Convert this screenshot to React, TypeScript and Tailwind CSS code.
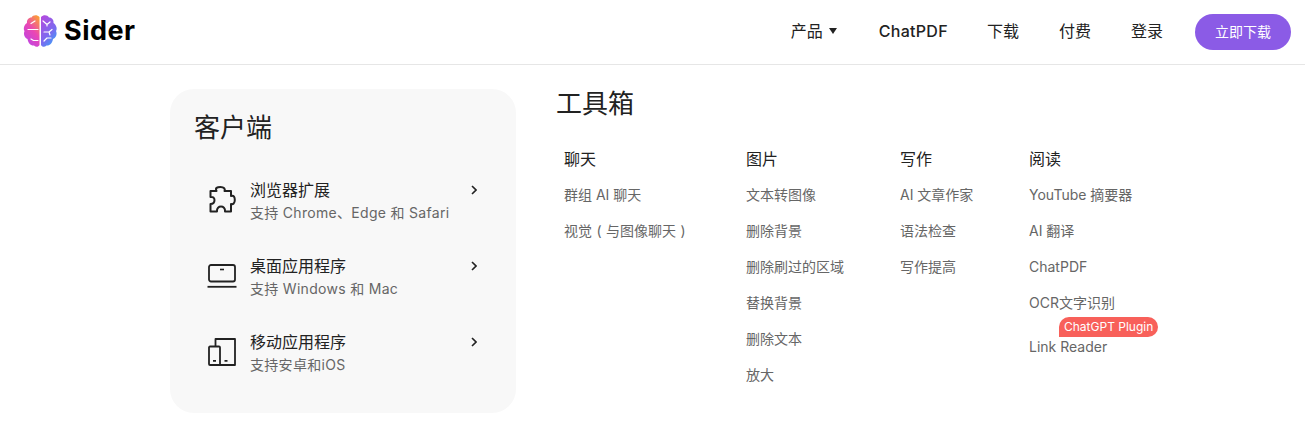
const sans = "font-['Inter','Noto_Sans_CJK_SC',sans-serif]";

function Logo() {
  return (
    <svg width="35" height="34" viewBox="0 0 35 34">
      <defs>
        <linearGradient id="l" x1="0.2" y1="1" x2="0.8" y2="0">
          <stop offset="0" stopColor="#b845ea" />
          <stop offset="0.55" stopColor="#ea46b4" />
          <stop offset="1" stopColor="#fb9a3c" />
        </linearGradient>
        <linearGradient id="r" x1="0.2" y1="0" x2="0.8" y2="1">
          <stop offset="0" stopColor="#b04cdf" />
          <stop offset="0.6" stopColor="#7a6cf0" />
          <stop offset="1" stopColor="#36a4f7" />
        </linearGradient>
      </defs>
      <path d="M16.500 3C14 .5 10 1 8.500 3.500 5.500 3.500 3.500 6 4 9 .8 11 .2 15 1.500 17 .2 20 1.500 24 4.500 25 5 29 8 32 11 31.500 13 33.500 15.500 33 16.500 31Z" fill="url(#l)" />
      <path d="M18 3C20.500 .5 24.500 1 26 3.500 29 3.500 31 6 30.500 9 33.500 11 34.500 15 33 17 34.500 20 33 24 30 25 29.500 29 26.500 32 23.500 31.500 21.500 33.500 19 33 18 31Z" fill="url(#r)" />
      <g fill="none" stroke="#fff" strokeWidth="1.200" strokeLinecap="round" strokeLinejoin="round">
        <path d="M8 9.500 12 7M5 15.500H15M8 25l2.500 1.500H15" />
        <path d="M20 7l4 3.500 3-2.500M24 10.500V12M21 18h5l3-2.500M26 18l1 3M21 27l3-3h4" />
      </g>
    </svg>
  );
}

function Puzzle() {
  return (
    <svg width="27" height="27" viewBox="0 0 27 27" fill="none" stroke="#222" strokeWidth="2" strokeLinejoin="round">
      <path d="M1.500 5H7.500C6 2 8 1 11.500 1 15 1 16.500 3 15.500 5H22V10C25 9 25.800 11.500 25.800 14 25.800 17 24 19 22 18V25.500H16C16.500 22 14 20.500 12 20.500 10 20.500 7.500 22 8 25.500H1.500V18C5 18 5.500 16 5.500 14 5.500 12 4 10.500 1.500 11Z" />
    </svg>
  );
}

function Laptop() {
  return (
    <svg width="30" height="24" viewBox="0 0 30 24" fill="none" stroke="#222" strokeWidth="1.800">
      <rect x="2" y="1" width="26" height="16.500" rx="2" />
      <path d="M0.500 22.800H29.500" />
      <path d="M13 5.500h4" strokeWidth="1.600" />
    </svg>
  );
}

function Devices() {
  return (
    <svg width="28" height="28" viewBox="0 0 28 28" fill="none" stroke="#222" strokeWidth="1.800" strokeLinejoin="round">
      <path d="M7.500 8.500V1H27V27H2a1 1 0 0 1-1-1V9.500a1 1 0 0 1 1-1h9a1 1 0 0 1 1 1V27" />
      <path d="M5 22.800h3M16.500 22.800h3" strokeWidth="1.800" />
    </svg>
  );
}

function Chevron() {
  return (
    <svg width="6" height="10" viewBox="0 0 6 10" fill="none" stroke="#222" strokeWidth="1.600">
      <path d="M1 1l4 4-4 4" />
    </svg>
  );
}

const clients = [
  { title: "浏览器扩展", sub: "支持 Chrome、Edge 和 Safari", icon: <Puzzle /> },
  { title: "桌面应用程序", sub: "支持 Windows 和 Mac", icon: <Laptop /> },
  { title: "移动应用程序", sub: "支持安卓和iOS", icon: <Devices /> },
];

const paren = "inline-block w-[14px] text-center";

const cols = [
  {
    w: "w-[182px]",
    head: "聊天",
    items: [
      "群组 AI 聊天",
      <>视觉<span className={paren}>(</span>与图像聊天<span className={paren}>)</span></>,
    ],
  },
  { w: "w-[154px]", head: "图片", items: ["文本转图像", "删除背景", "删除刷过的区域", "替换背景", "删除文本", "放大"] },
  { w: "w-[129px]", head: "写作", items: ["AI 文章作家", "语法检查", "写作提高"] },
  { w: "w-[140px]", head: "阅读", items: ["YouTube 摘要器", "AI 翻译", "ChatPDF", "OCR文字识别"] },
];

export default function App() {
  return (
    <div className={`${sans} w-[1305px] h-[431px] bg-white overflow-hidden text-[#222]`}>
      <header className="h-[65px] border-b border-[#e6e6e6] flex items-center pl-[23px] pr-[14px]">
        <div className="flex items-center gap-[6px] mb-[2px]">
          <Logo />
          <span className="text-[27px] font-bold text-black leading-none tracking-[0.5px] mb-[2px]">Sider</span>
        </div>
        <nav className="ml-auto flex items-center text-[16px]">
          <span className="flex items-center gap-[6px] mb-[2px]">
            产品
            <span className="w-0 h-0 border-x-[4px] border-x-transparent border-t-[6px] border-t-[#222]" />
          </span>
          <span className="ml-[42px] font-medium tracking-[0.3px] mb-[2px]">ChatPDF</span>
          <span className="ml-[39px] mb-[2px]">下载</span>
          <span className="ml-[40px] mb-[2px]">付费</span>
          <span className="ml-[40px] mb-[2px]">登录</span>
          <span className="ml-[32px] w-[96px] h-[36px] pb-[2px] rounded-full bg-[#8b5be6] text-white text-[14px] flex items-center justify-center">立即下载</span>
        </nav>
      </header>
      <main className="flex items-start pl-[170px]">
        <section className="mt-[24px] w-[346px] h-[324px] rounded-[24px] bg-[#f8f8f8] pl-[24px] pt-[21px]">
          <h2 className="text-[26px] leading-[36px]">客户端</h2>
          <div className="mt-[31px] flex flex-col gap-[28px]">
            {clients.map((c) => (
              <div key={c.title} className="flex items-center h-[48px]">
                <div className="ml-[13px] w-[30px] flex justify-center mb-[3px]">{c.icon}</div>
                <div className="ml-[13px] w-[221px]">
                  <div className="text-[16px] leading-[24px]">{c.title}</div>
                  <div className="text-[14px] leading-[22px] text-[#666] tracking-[0.3px] whitespace-nowrap">{c.sub}</div>
                </div>
                <div className="self-start mt-[8px]"><Chevron /></div>
              </div>
            ))}
          </div>
        </section>
        <section className="ml-[40px] mt-[19px]">
          <h2 className="text-[26px] leading-[40px]">工具箱</h2>
          <div className="mt-[23px] ml-[8px] flex">
            {cols.map((col) => (
              <div key={col.head} className={col.w}>
                <h3 className="text-[16px] leading-[24px] mb-[6px]">{col.head}</h3>
                {col.items.map((it, i) => (
                  <div key={i} className="text-[14px] leading-[36px] text-[#666] whitespace-nowrap">{it}</div>
                ))}
                {col.head === "阅读" && (
                  <div className="relative mt-[16px] text-[14px] leading-[20px] text-[#666]">
                    Link Reader
                    <span className="absolute left-[30px] top-[-20px] h-[20px] px-[5px] rounded-[10px] rounded-bl-none bg-[#f8605a] text-white text-[12px] leading-[20px] whitespace-nowrap">ChatGPT Plugin</span>
                  </div>
                )}
              </div>
            ))}
          </div>
        </section>
      </main>
    </div>
  );
}
